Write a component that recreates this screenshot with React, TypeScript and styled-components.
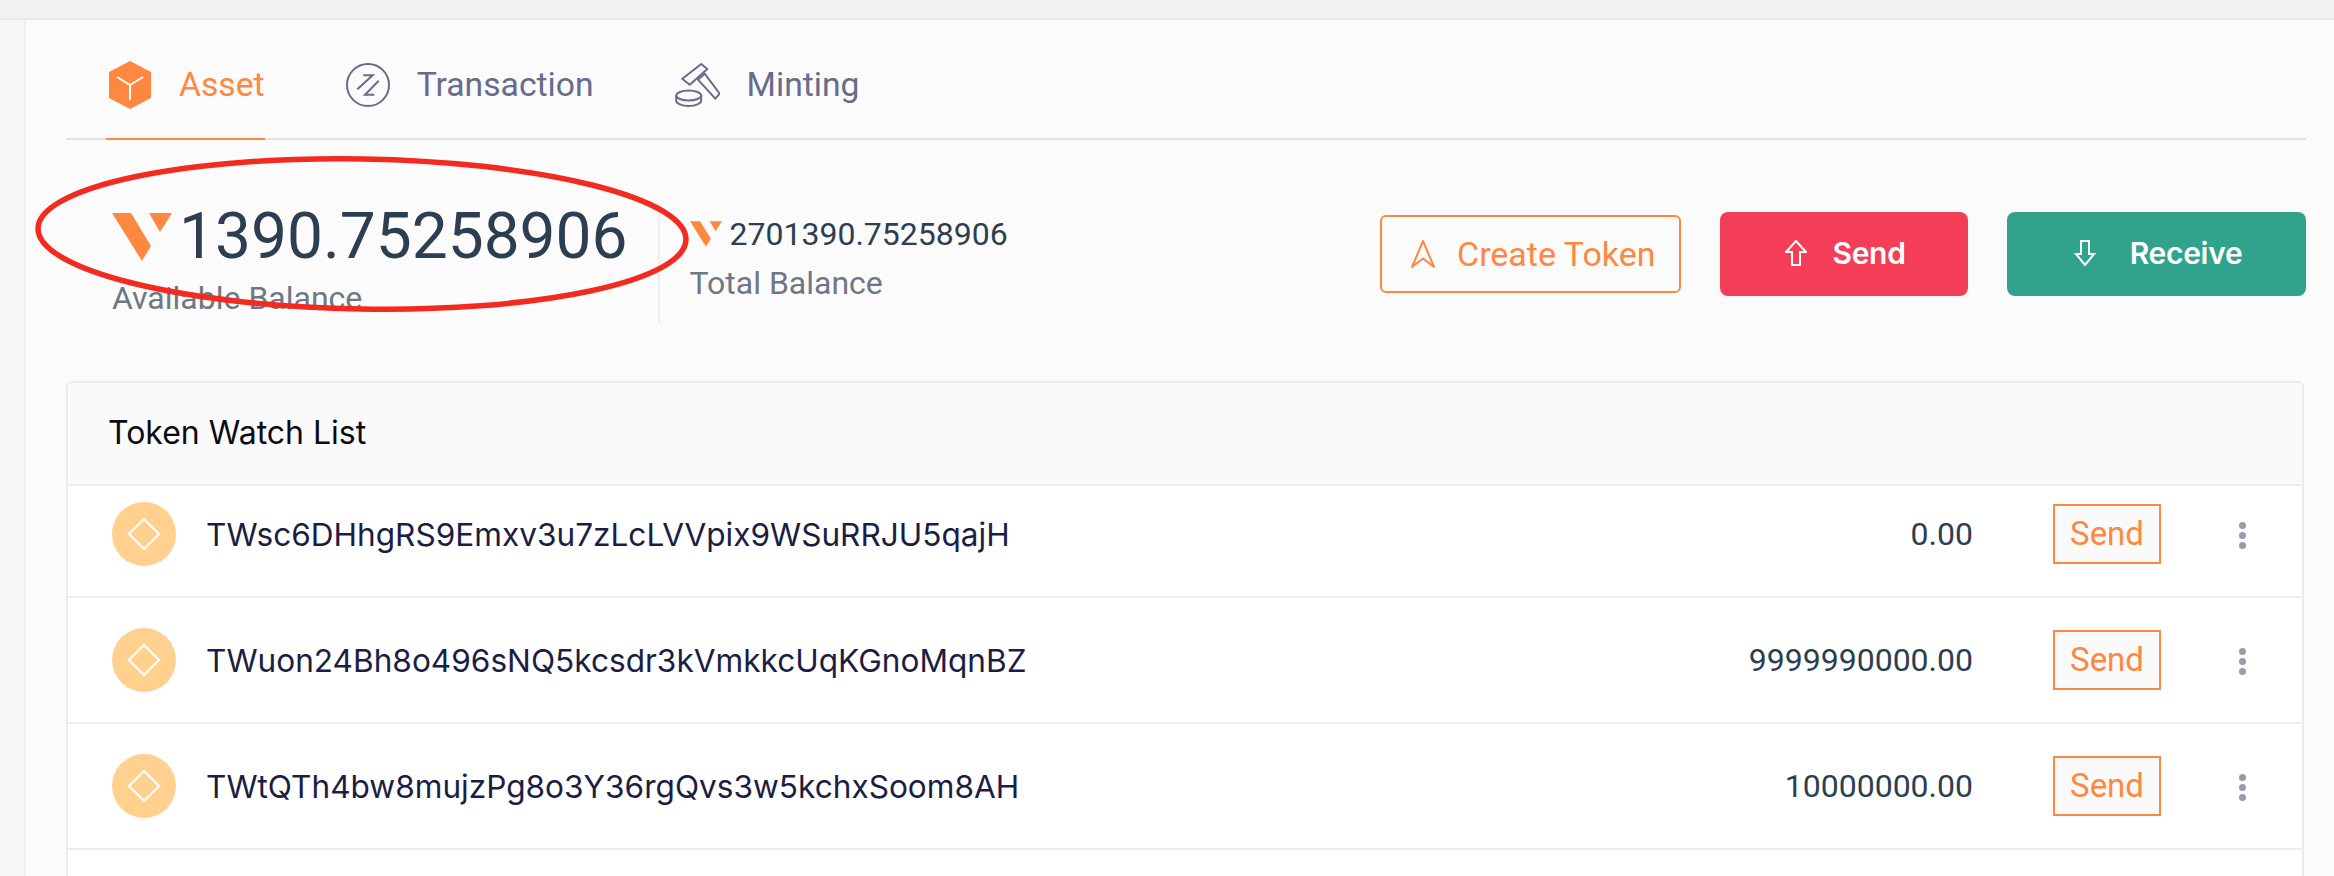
import styled, { createGlobalStyle } from "styled-components";

const GlobalStyle = createGlobalStyle`
  html, body {
    margin: 0;
    padding: 0;
    background: #fbfbfb;
  }
  * {
    box-sizing: border-box;
  }
`;

const ORANGE = "#ff8841";
const SLATE = "#2c3e50";

const Page = styled.div`
  position: relative;
  width: 2334px;
  height: 876px;
  overflow: hidden;
  display: flex;
  flex-direction: column;
  font-family: Roboto, "Liberation Sans", sans-serif;
`;

const TopBar = styled.div`
  flex: none;
  height: 20px;
  background: #f1f1f1;
  border-bottom: 2px solid #e9e9ee;
`;

const Body = styled.div`
  flex: 1;
  min-height: 0;
  display: flex;
`;

const SideGap = styled.div`
  flex: none;
  width: 26px;
  background: #f6f6f6;
  border-right: 2px solid #eeeeef;
`;

const Main = styled.main`
  flex: 1;
  min-width: 0;
  padding: 0 28px 0 40px;
  background: #fbfbfb;
`;

const Tabs = styled.nav`
  display: flex;
  gap: 81px;
  height: 120px;
  padding-left: 40px;
  border-bottom: 2px solid #e1e3e7;
`;

const Tab = styled.div<{ $active?: boolean }>`
  display: flex;
  align-items: center;
  gap: 27px;
  height: 120px;
  padding-top: 11px;
  font-size: 33.7px;
  color: ${(p) => (p.$active ? ORANGE : "#686b8b")};
  border-bottom: 2px solid ${(p) => (p.$active ? ORANGE : "transparent")};
`;

const Summary = styled.section`
  display: flex;
  align-items: flex-start;
  height: 241px;
  padding-top: 65px;
`;

const Balance = styled.div`
  display: flex;
  flex-direction: column;
  height: 117px;
  padding: 0 30px 0 46px;
  border-right: 2px solid #eeeeef;
`;

const TotalBalance = styled.div`
  display: flex;
  flex-direction: column;
  padding: 9px 0 0 30px;
`;

const Amount = styled.div<{ $big?: boolean }>`
  display: flex;
  align-items: center;
  gap: ${(p) => (p.$big ? "7px" : "8px")};
  height: ${(p) => (p.$big ? "64px" : "40px")};
  font-size: ${(p) => (p.$big ? "64px" : "32px")};
  line-height: 1;
  color: ${SLATE};
`;

const BalanceLabel = styled.div`
  margin-top: 11px;
  font-size: 32px;
  line-height: 36px;
  color: #6e7885;
`;

const Actions = styled.div`
  margin-left: auto;
  margin-top: 7px;
  display: flex;
  align-items: center;
  gap: 39px;
`;

const OutlineButton = styled.div`
  display: flex;
  align-items: center;
  gap: 22px;
  width: 301px;
  height: 78px;
  padding-left: 29px;
  border: 2px solid ${ORANGE};
  border-radius: 6px;
  font-size: 34px;
  color: ${ORANGE};
`;

const SolidButton = styled.div<{ $tone: string; $wide?: boolean }>`
  display: flex;
  align-items: center;
  justify-content: center;
  gap: ${(p) => (p.$wide ? "34px" : "25px")};
  width: ${(p) => (p.$wide ? "299px" : "248px")};
  height: 84px;
  padding: 0 0 2px 3px;
  border-radius: 8px;
  background: ${(p) => p.$tone};
  color: #ffffff;
  font-family: Inter, Roboto, sans-serif;
  font-size: 30px;
  font-weight: 600;
  letter-spacing: -0.3px;
`;

const Card = styled.section`
  height: 520px;
  margin-right: 2px;
  border: 2px solid #ececef;
  border-bottom: none;
  border-radius: 6px 6px 0 0;
  overflow: hidden;
  font-family: Inter, Roboto, sans-serif;
`;

const CardHeader = styled.div`
  display: flex;
  align-items: center;
  height: 103px;
  padding: 0 0 2px 40px;
  font-size: 32px;
  color: #0b0b14;
  background: #fafafa;
  border-bottom: 2px solid #ececef;
`;

const RowList = styled.div`
  height: 420px;
  overflow: hidden;
  background: #ffffff;
`;

const RowScroll = styled.div`
  margin-top: -14px;
`;

const Row = styled.div`
  display: flex;
  align-items: center;
  height: 126px;
  padding-left: 44px;
  border-bottom: 2px solid #ececef;
`;

const TokenBadge = styled.div`
  flex: none;
  width: 64px;
  height: 64px;
  border-radius: 50%;
  background: #ffd08e;
  display: flex;
  align-items: center;
  justify-content: center;
`;

const Address = styled.div`
  margin-left: 30px;
  font-size: 31.6px;
  color: #1b1e42;
`;

const RowAmount = styled.div`
  margin-left: auto;
  font-family: Roboto, sans-serif;
  font-size: 32px;
  color: ${SLATE};
`;

const RowSend = styled.div`
  width: 108px;
  height: 60px;
  margin-left: 80px;
  padding-bottom: 2px;
  display: flex;
  align-items: center;
  justify-content: center;
  border: 2px solid ${ORANGE};
  background: #fafafa;
  font-family: Roboto, sans-serif;
  font-size: 33px;
  color: ${ORANGE};
`;

const Dots = styled.div`
  width: 7px;
  margin: 3px 56px 0 78px;
  display: flex;
  flex-direction: column;
  gap: 3px;
`;

const Dot = styled.span`
  width: 7px;
  height: 7px;
  border-radius: 50%;
  background: #9a9aab;
`;

const Annotation = styled.svg`
  position: absolute;
  left: 30px;
  top: 150px;
  pointer-events: none;
`;

function VLogo({ w, h }: { w: number; h: number }) {
  return (
    <svg width={w} height={h} viewBox="0 0 60 48">
      <path d="M0 0h19l20 33-9 15z" fill={ORANGE} />
      <path d="M37 0h23L48 19z" fill={ORANGE} />
    </svg>
  );
}

function AssetIcon() {
  return (
    <svg width="46" height="48" viewBox="0 0 46 48">
      <path d="M24 0l21 11v26L24 48 3 37V11z" fill={ORANGE} />
      <path d="M24 24v15M24 24L11 16M24 24l13-8" fill="none" stroke="#fff" strokeWidth="2" />
    </svg>
  );
}

function TransactionIcon() {
  return (
    <svg width="44" height="44" viewBox="0 0 44 44" fill="none" stroke="#686b8b" strokeWidth="2">
      <circle cx="22" cy="22" r="21" />
      <path d="M17.3 12.3h9.4l-15.4 14M32.7 17.7L19 31.7h9.3" />
    </svg>
  );
}

function MintingIcon() {
  return (
    <svg width="45" height="44" viewBox="0 0 45 44" fill="none" stroke="#686b8b" strokeWidth="2" strokeLinejoin="round">
      <path d="M7.3 15.7L26.3 1l6 5-17.6 15.7z" />
      <path d="M23 16.7l6.7-6 15 20-4.4 5z" />
      <ellipse cx="13.7" cy="32.5" rx="12.5" ry="5" />
      <path d="M1.2 32.5v5c0 3 5.5 5.5 12.5 5.5s12.5-2.5 12.5-5.5v-5" />
    </svg>
  );
}

function NavigateIcon() {
  return (
    <svg width="24" height="28" viewBox="0 0 24 28" fill="none" stroke={ORANGE} strokeWidth="2" strokeLinejoin="round">
      <path d="M12 1l11 26-11-8.5L1 27z" />
    </svg>
  );
}

function ArrowIcon({ down }: { down?: boolean }) {
  return (
    <svg width="22" height="26" viewBox="0 0 22 26" fill="none" stroke="#fff" strokeWidth="2">
      <path d={down ? "M7 1h8v13h5L11 25 2 14h5z" : "M7 25h8V12h6L11 1 1 12h6z"} />
    </svg>
  );
}

function DiamondIcon() {
  return (
    <svg width="32" height="32" viewBox="0 0 32 32" fill="none" stroke="#fff" strokeWidth="2">
      <path d="M16 1l15 15-15 15L1 16z" />
    </svg>
  );
}

const tokens = [
  { address: "TWsc6DHhgRS9Emxv3u7zLcLVVpix9WSuRRJU5qajH", amount: "0.00" },
  { address: "TWuon24Bh8o496sNQ5kcsdr3kVmkkcUqKGnoMqnBZ", amount: "9999990000.00" },
  { address: "TWtQTh4bw8mujzPg8o3Y36rgQvs3w5kchxSoom8AH", amount: "10000000.00" },
];

export default function App() {
  return (
    <Page>
      <GlobalStyle />
      <TopBar />
      <Body>
        <SideGap />
        <Main>
          <Tabs>
            <Tab $active>
              <AssetIcon />
              Asset
            </Tab>
            <Tab>
              <TransactionIcon />
              Transaction
            </Tab>
            <Tab>
              <MintingIcon />
              Minting
            </Tab>
          </Tabs>
          <Summary>
            <Balance>
              <Amount $big>
                <VLogo w={60} h={48} />
                1390.75258906
              </Amount>
              <BalanceLabel>Available Balance</BalanceLabel>
            </Balance>
            <TotalBalance>
              <Amount>
                <VLogo w={32} h={26} />
                2701390.75258906
              </Amount>
              <BalanceLabel>Total Balance</BalanceLabel>
            </TotalBalance>
            <Actions>
              <OutlineButton>
                <NavigateIcon />
                Create Token
              </OutlineButton>
              <SolidButton $tone="#f43d56">
                <ArrowIcon />
                Send
              </SolidButton>
              <SolidButton $tone="#31a28c" $wide>
                <ArrowIcon down />
                Receive
              </SolidButton>
            </Actions>
          </Summary>
          <Card>
            <CardHeader>Token Watch List</CardHeader>
            <RowList>
              <RowScroll>
                {[...tokens, { address: "", amount: "" }].map((t, i) =>
                  t.address ? (
                    <Row key={i}>
                      <TokenBadge>
                        <DiamondIcon />
                      </TokenBadge>
                      <Address>{t.address}</Address>
                      <RowAmount>{t.amount}</RowAmount>
                      <RowSend>Send</RowSend>
                      <Dots>
                        <Dot />
                        <Dot />
                        <Dot />
                      </Dots>
                    </Row>
                  ) : (
                    <Row key={i} />
                  )
                )}
              </RowScroll>
            </RowList>
          </Card>
        </Main>
      </Body>
      <Annotation width="670" height="170" viewBox="0 0 670 170" fill="none">
        <ellipse cx="332" cy="84" rx="324" ry="75" stroke="#f32a1f" strokeWidth="5.5" transform="rotate(1 332 84)" />
      </Annotation>
    </Page>
  );
}
